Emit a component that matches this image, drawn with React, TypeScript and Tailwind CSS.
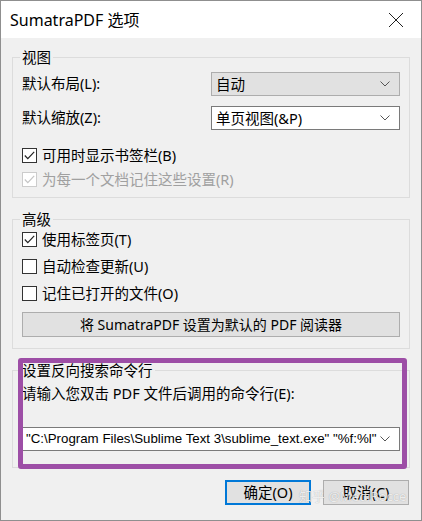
import React from 'react'

const FONT = { fontFamily: '"Noto Sans", "Noto Sans CJK SC", sans-serif' }

function Chevron() {
  return (
    <svg width="10" height="6" viewBox="0 0 10 6" className="shrink-0">
      <polyline points="0.5,0.5 5,5 9.5,0.5" fill="none" stroke="#555" strokeWidth="1" />
    </svg>
  )
}

function Dropdown({ value, gray }: { value: string; gray?: boolean }) {
  return (
    <div
      className={`flex h-[24px] w-[189px] items-center justify-between border pl-[4px] pr-[9px] ${
        gray ? 'border-[#adadad] bg-[#e1e1e1]' : 'border-[#7a7a7a] bg-white'
      }`}
    >
      <span className="text-[14.5px] leading-none text-black">{value}</span>
      <Chevron />
    </div>
  )
}

function Check({ label, checked, disabled }: { label: string; checked?: boolean; disabled?: boolean }) {
  return (
    <div className="flex h-[20px] items-center gap-[5px]">
      <div
        className={`flex h-[15px] w-[15px] items-center justify-center border bg-white ${
          disabled ? 'border-[#cccccc]' : 'border-[#333333]'
        }`}
      >
        {checked && (
          <svg width="11" height="9" viewBox="0 0 11 9">
            <polyline
              points="0.8,4.5 3.8,7.6 10.2,0.8"
              fill="none"
              stroke={disabled ? '#c4c4c4' : '#222'}
              strokeWidth="1.2"
            />
          </svg>
        )}
      </div>
      <span className={`text-[14.5px] leading-none ${disabled ? 'text-[#a0a0a0]' : 'text-black'}`}>{label}</span>
    </div>
  )
}

function Group({ title, children, className }: { title: string; children: React.ReactNode; className?: string }) {
  return (
    <fieldset className={`min-w-0 border border-[#dcdcdc] px-[9px] ${className ?? ''}`}>
      <legend className="-ml-[2px] px-[2px] text-[14.5px] leading-[20px] text-black">{title}</legend>
      {children}
    </fieldset>
  )
}

export default function App() {
  return (
    <div style={FONT} className="relative flex h-[521px] w-[422px] flex-col border border-[#8f8f8f] bg-[#f0f0f0]">
      <div className="flex h-[37px] shrink-0 items-center justify-between bg-white pl-[9px] pr-[17px]">
        <span className="text-[16px] text-black">SumatraPDF 选项</span>
        <svg width="16" height="16" viewBox="0 0 16 16">
          <path d="M1 1 L15 15 M15 1 L1 15" stroke="#222" strokeWidth="1" />
        </svg>
      </div>

      <div className="flex flex-col px-[11px]">
        <Group title="视图" className="mt-[9px] pb-[8px]">
          <div className="mt-[5px] flex items-center justify-between">
            <span className="text-[14.5px] text-black">默认布局(L):</span>
            <Dropdown value="自动" gray />
          </div>
          <div className="mt-[10px] flex items-center justify-between">
            <span className="text-[14.5px] text-black">默认缩放(Z):</span>
            <Dropdown value="单页视图(&P)" />
          </div>
          <div className="mt-[15px] flex flex-col gap-[4px]">
            <Check label="可用时显示书签栏(B)" checked />
            <Check label="为每一个文档记住这些设置(R)" checked disabled />
          </div>
        </Group>

        <Group title="高级" className="mt-[11px] pb-[11px]">
          <div className="flex flex-col gap-[7px]">
            <Check label="使用标签页(T)" checked />
            <Check label="自动检查更新(U)" />
            <Check label="记住已打开的文件(O)" />
          </div>
          <div className="mt-[9px] flex h-[25px] items-center justify-center border border-[#adadad] bg-[#e1e1e1] text-[14px] text-black">
            将 SumatraPDF 设置为默认的 PDF 阅读器
          </div>
        </Group>

        <Group title="设置反向搜索命令行" className="mt-[11px] pb-[16px]">
          <div className="mt-[4px] flex h-[20px] items-center text-[14.5px] text-black">
            请输入您双击 PDF 文件后调用的命令行(E):
          </div>
          <div className="mt-[23px] flex h-[24px] items-center justify-between overflow-hidden border border-[#7a7a7a] bg-white pl-[3px] pr-[9px]">
            <span
              style={{ fontFamily: '"Liberation Sans", Arial, sans-serif' }}
              className="min-w-0 whitespace-nowrap text-[13.3px] leading-none text-black"
            >
              "C:\Program Files\Sublime Text 3\sublime_text.exe" "%f:%l"
            </span>
            <Chevron />
          </div>
        </Group>

        <div className="mt-[12px] flex justify-end gap-[12px] pr-[1px]">
          <div className="flex h-[25px] w-[86px] items-center justify-center border-2 border-[#0078d7] bg-[#e1e1e1] text-[14.5px] text-black">
            确定(O)
          </div>
          <div className="flex h-[25px] w-[86px] items-center justify-center border border-[#adadad] bg-[#e1e1e1] text-[14.5px] text-black">
            取消(C)
          </div>
        </div>
      </div>

      <div className="pointer-events-none absolute left-[17px] top-[357px] h-[111px] w-[389px] rounded-[3px] border-[5px] border-[#9d4ea6]" />
      <div className="pointer-events-none absolute left-[298px] top-[486px] whitespace-nowrap text-[13px] text-white/80 [text-shadow:0_0_1px_rgba(0,0,0,0.35)]">
        知乎 @MediRocce
      </div>
    </div>
  )
}
